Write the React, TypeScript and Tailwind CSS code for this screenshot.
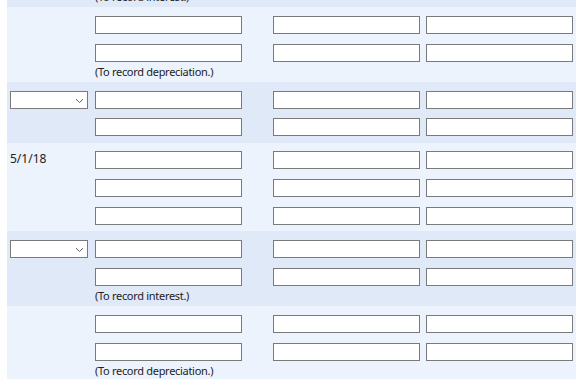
import React from "react";

const Box = ({ className = "" }: { className?: string }) => (
  <div className={`h-[18px] w-[147px] border border-[#7a7a7a] bg-white ${className}`} />
);

const Select = () => (
  <div className="relative h-[18px] w-[78px] border border-[#7a7a7a] bg-white">
    <svg className="absolute right-[3px] top-[6px]" width="9" height="6" viewBox="0 0 9 6">
      <path d="M1 1.2 L4.5 4.5 L8 1.2" fill="none" stroke="#606060" strokeWidth="1" />
    </svg>
  </div>
);

type RowProps = { first?: React.ReactNode };
const Row = ({ first }: RowProps) => (
  <div className="flex h-[18px] items-start">
    <div className="ml-[3px] w-[78px]">{first}</div>
    <Box className="ml-[7px]" />
    <Box className="ml-[31px]" />
    <Box className="ml-[6px]" />
  </div>
);

const Caption = ({ text }: { text: string }) => (
  <div className="ml-[88px] h-[20px] pt-[2px] text-[11px] leading-[16px] tracking-[-0.3px] text-[#222]">
    {text}
  </div>
);

export default function App() {
  return (
    <div
      className="h-[379px] w-[588px] overflow-hidden bg-white"
      style={{ fontFamily: '"Noto Sans", "Open Sans", sans-serif' }}
    >
      <div className="ml-[7px] w-[569px]">
        <div className="h-[7px] overflow-hidden bg-[#dfe9f8]">
          <div className="-mt-[13px]">
            <Caption text="(To record interest.)" />
          </div>
        </div>
        {/* group 1 */}
        <div className="flex flex-col gap-[10px] bg-[#edf3fd] pt-[9px]">
          <Row />
          <div className="flex flex-col">
            <Row />
            <Caption text="(To record depreciation.)" />
          </div>
        </div>
        {/* group 2 */}
        <div className="flex flex-col gap-[9px] bg-[#dfe9f8] pb-[7px] pt-[9px]">
          <Row first={<Select />} />
          <Row />
        </div>
        {/* group 3 */}
        <div className="relative flex flex-col gap-[10px] bg-[#edf3fd] pb-[6px] pt-[8px]">
          <Row
            first={
              <div className="text-[12px] leading-[16px] text-[#222]">5/1/18</div>
            }
          />
          <Row />
          <Row />
        </div>
        {/* group 4 */}
        <div className="flex flex-col gap-[10px] bg-[#dfe9f8] pt-[9px]">
          <Row first={<Select />} />
          <div className="flex flex-col">
            <Row />
            <Caption text="(To record interest.)" />
          </div>
        </div>
        {/* group 5 */}
        <div className="flex flex-col gap-[10px] bg-[#edf3fd] pt-[9px]">
          <Row />
          <div className="flex flex-col">
            <Row />
            <Caption text="(To record depreciation.)" />
          </div>
        </div>
      </div>
    </div>
  );
}
